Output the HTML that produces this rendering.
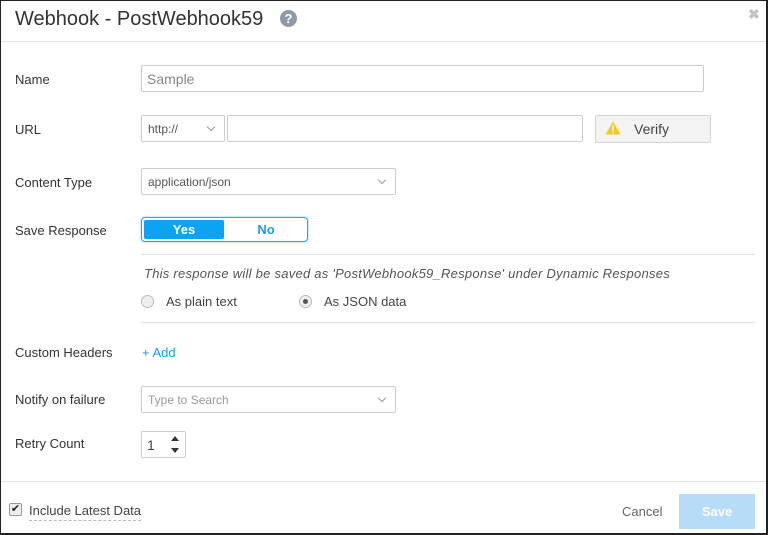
<!DOCTYPE html>
<html><head><style>
*{box-sizing:border-box;margin:0;padding:0}
body{width:768px;height:535px;background:#fff;font-family:"Liberation Sans",sans-serif;color:#333;position:relative;overflow:hidden}
.frame{position:absolute;left:0;top:0;width:768px;height:535px;border:1px solid #222;border-right:2px solid #222;border-bottom:2px solid #222}
.a{position:absolute}
.lbl{position:absolute;left:15px;font-size:13px;color:#333}
.box{position:absolute;border:1px solid #ccc;background:#fff;border-radius:2px;font-size:13px;color:#555}
.chev{position:absolute;width:6px;height:6px;border-right:1px solid #999;border-bottom:1px solid #999;transform:rotate(45deg)}
.hr{position:absolute;height:1px;background:#e2e2e2}
</style></head><body>
<div class="frame"></div>
<div class="a" style="left:15px;top:8px;font-size:20px;color:#333">Webhook - PostWebhook59</div>
<div class="a" style="left:280px;top:10px;width:17px;height:17px;border-radius:50%;background:#8e9aa8;color:#fff;font-size:13px;font-weight:bold;text-align:center;line-height:17px">?</div>
<div class="a" style="left:748px;top:6px;font-size:14px;color:#c4c4c4;font-weight:bold">✖</div>
<div class="hr" style="left:1px;right:2px;top:41px"></div>

<div class="lbl" style="top:72px">Name</div>
<div class="box" style="left:141px;top:65px;width:563px;height:27px;padding:5px 5px;font-size:14px;color:#888">Sample</div>

<div class="lbl" style="top:122px">URL</div>
<div class="box" style="left:141px;top:115px;width:84px;height:27px;padding:6px 6px;font-size:12px">http://</div>
<div class="chev" style="left:208px;top:124px"></div>
<div class="box" style="left:227px;top:115px;width:356px;height:27px"></div>
<div class="box" style="left:595px;top:115px;width:116px;height:28px;background:#f4f4f4;border-color:#d5d5d5"></div>
<svg class="a" style="left:605px;top:121px" width="16" height="14" viewBox="0 0 16 14"><path d="M8 0.5L15.5 13.5H0.5Z" fill="#f5c823"/><rect x="7.2" y="4.5" width="1.6" height="5" fill="#fff"/><rect x="7.2" y="10.5" width="1.6" height="1.6" fill="#fff"/></svg>
<div class="a" style="left:634px;top:121px;font-size:14px;color:#444">Verify</div>

<div class="lbl" style="top:175px">Content Type</div>
<div class="box" style="left:141px;top:168px;width:255px;height:27px;padding:6px 6px;font-size:12px">application/json</div>
<div class="chev" style="left:379px;top:177px"></div>

<div class="lbl" style="top:223px">Save Response</div>
<div class="a" style="left:141px;top:217px;width:167px;height:25px;border:1px solid #1ea7f5;border-radius:4px;box-shadow:0 0 2px #7cc8f5"></div>
<div class="a" style="left:144px;top:220px;width:80px;height:19px;background:#0ca3f5;border-radius:2px;color:#fff;font-weight:bold;font-size:13px;text-align:center;line-height:19px">Yes</div>
<div class="a" style="left:226px;top:220px;width:80px;height:19px;color:#1a9fe8;font-weight:bold;font-size:13px;text-align:center;line-height:19px">No</div>

<div class="hr" style="left:141px;width:614px;top:254px"></div>
<div class="a" style="left:144px;top:266px;font-size:13px;font-style:italic;color:#555;letter-spacing:0.25px">This response will be saved as 'PostWebhook59_Response' under Dynamic Responses</div>
<div class="a" style="left:141px;top:295px;width:13px;height:13px;border-radius:50%;border:1px solid #bbb;background:#eee"></div>
<div class="a" style="left:166px;top:294px;font-size:13px;color:#444">As plain text</div>
<div class="a" style="left:299px;top:295px;width:13px;height:13px;border-radius:50%;border:1px solid #bbb;background:#eee"></div>
<div class="a" style="left:303px;top:299px;width:5px;height:5px;border-radius:50%;background:#555"></div>
<div class="a" style="left:324px;top:294px;font-size:13px;color:#444">As JSON data</div>
<div class="hr" style="left:141px;width:614px;top:322px"></div>

<div class="lbl" style="top:345px">Custom Headers</div>
<div class="a" style="left:142px;top:345px;font-size:13px;color:#1a9fe8">+ Add</div>

<div class="lbl" style="top:392px">Notify on failure</div>
<div class="box" style="left:141px;top:386px;width:255px;height:27px;padding:6px 6px;font-size:12px;color:#999">Type to Search</div>
<div class="chev" style="left:379px;top:395px"></div>

<div class="lbl" style="top:436px">Retry Count</div>
<div class="box" style="left:141px;top:431px;width:45px;height:27px;padding:5px 5px;font-size:14px;color:#444">1</div>
<div class="a" style="left:171px;top:436px;width:0;height:0;border-left:4px solid transparent;border-right:4px solid transparent;border-bottom:5px solid #333"></div>
<div class="a" style="left:171px;top:448px;width:0;height:0;border-left:4px solid transparent;border-right:4px solid transparent;border-top:5px solid #333"></div>

<div class="hr" style="left:1px;right:2px;top:481px"></div>
<div class="a" style="left:9px;top:503px;width:13px;height:13px;border:1px solid #999;background:#eee;border-radius:2px;font-size:11px;line-height:11px;text-align:center;color:#222">✔</div>
<div class="a" style="left:29px;top:503px;font-size:13px;color:#444;border-bottom:1px dashed #bbb;padding-bottom:2px">Include Latest Data</div>
<div class="a" style="left:622px;top:504px;font-size:13px;color:#666">Cancel</div>
<div class="a" style="left:679px;top:494px;width:76px;height:35px;background:#b7dcf8;color:#fff;font-size:13px;font-weight:bold;text-align:center;line-height:35px">Save</div>
</body></html>
